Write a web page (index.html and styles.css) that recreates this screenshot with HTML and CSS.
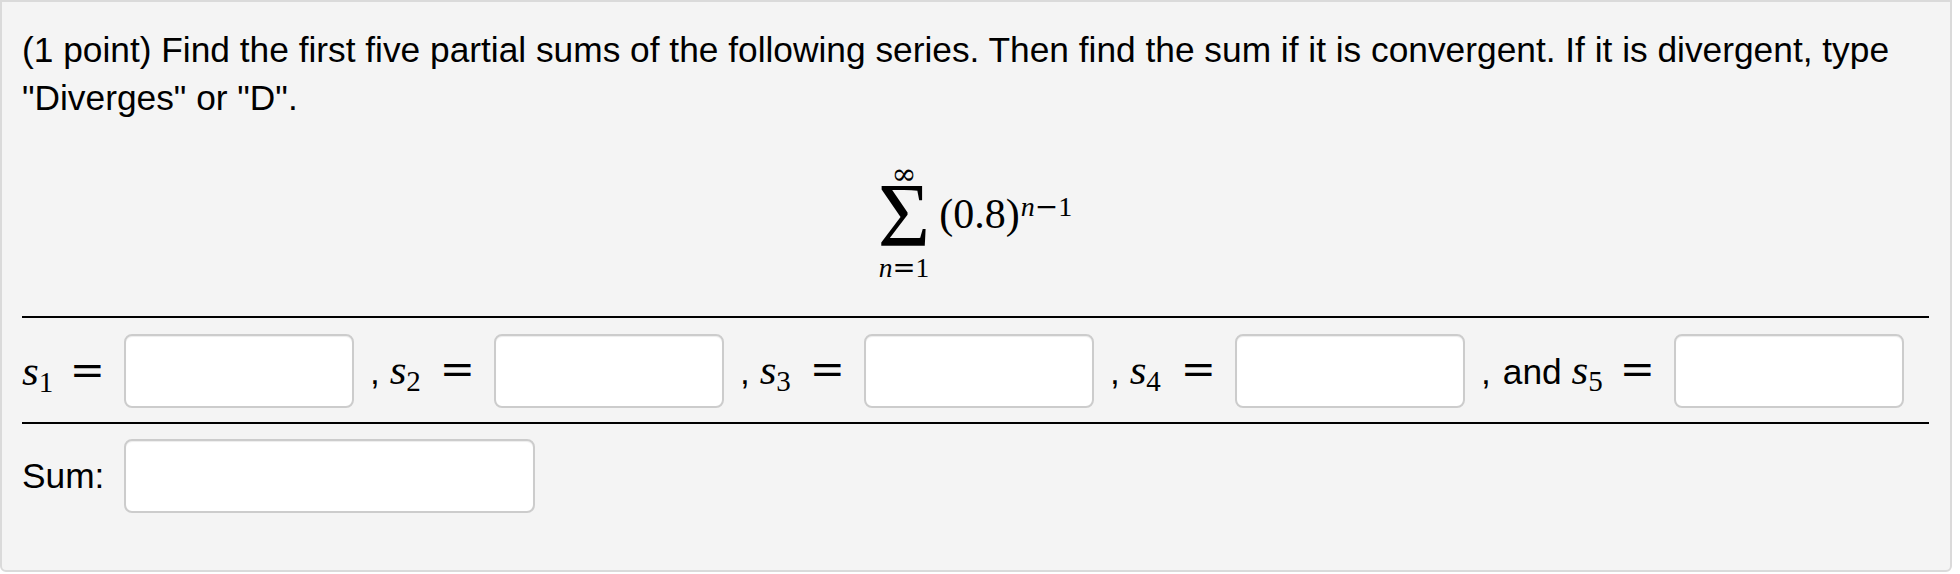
FILE: index.html
```html
<!DOCTYPE html>
<html lang="en">
<head>
<meta charset="utf-8">
<title>Partial sums</title>
<link rel="stylesheet" href="styles.css">
</head>
<body>
<div class="panel">
  <p class="q">(1 point) Find the first five partial sums of the following series. Then find the sum if it is convergent. If it is divergent, type "Diverges" or "D".</p>

  <div class="display">
    <div class="op">
      <span class="lim-top">∞</span>
      <span class="sigma">Σ</span>
      <span class="lim-bot"><i>n</i><span class="eqs">=</span>1</span>
    </div>
    <div class="term">
      <span class="base">(0.8)</span>
      <span class="sup"><i>n</i><span class="minus">−</span>1</span>
    </div>
  </div>

  <div class="sums">
    <span class="lbl lbl-first"><span class="var"><i>s</i><sub>1</sub></span><span class="eq">=</span></span>
    <input class="ans" type="text" aria-label="s1">
    <span class="lbl lbl-mid"><span class="comma">,&nbsp;</span><span class="var"><i>s</i><sub>2</sub></span><span class="eq">=</span></span>
    <input class="ans" type="text" aria-label="s2">
    <span class="lbl lbl-mid"><span class="comma">,&nbsp;</span><span class="var"><i>s</i><sub>3</sub></span><span class="eq">=</span></span>
    <input class="ans" type="text" aria-label="s3">
    <span class="lbl lbl-mid lbl-four"><span class="comma">,&nbsp;</span><span class="var"><i>s</i><sub>4</sub></span><span class="eq">=</span></span>
    <input class="ans" type="text" aria-label="s4">
    <span class="lbl lbl-last"><span class="comma">,</span><span class="word">and&nbsp;</span><span class="var"><i>s</i><sub>5</sub></span><span class="eq">=</span></span>
    <input class="ans" type="text" aria-label="s5">
  </div>

  <div class="total">
    <span class="sumlbl">Sum:</span>
    <input class="ans ans-wide" type="text" aria-label="Sum">
  </div>
</div>
</body>
</html>
```

FILE: styles.css
```css
* {
  box-sizing: border-box;
}

body {
  margin: 0;
  background: #ffffff;
}

.panel {
  width: 1952px;
  background: #f4f4f4;
  border: 2px solid #dadada;
  border-radius: 0 0 6px 6px;
  padding: 24px 21px 57px 20px;
  font-family: "Liberation Sans", Arial, sans-serif;
  font-size: 35.3px;
  color: #000;
}

.q {
  margin: 0;
  line-height: 48px;
}

/* display formula */
.display {
  display: flex;
  justify-content: center;
  align-items: flex-start;
  height: 194px;
  padding-top: 43px;
  font-family: "Liberation Serif", "Times New Roman", serif;
}

.op {
  display: flex;
  flex-direction: column;
  align-items: center;
}

.lim-top {
  font-family: "DejaVu Serif", serif;
  font-size: 30px;
  line-height: 18px;
}

.sigma {
  font-size: 90px;
  line-height: 66px;
  margin: 0 -4px;
}

.lim-bot {
  font-size: 27.5px;
  line-height: 36px;
  white-space: nowrap;
}

.eqs,
.minus {
  font-family: "DejaVu Serif", serif;
}

.term {
  display: flex;
  align-items: flex-start;
  margin-top: 28px;
  margin-left: 10px;
  white-space: nowrap;
}

.base {
  font-size: 42px;
  line-height: 42px;
}

.sup {
  font-size: 28px;
  line-height: 28px;
  margin-left: 1px;
}

/* answer rows */
.sums {
  display: flex;
  align-items: center;
  border-top: 2px solid #000;
  border-bottom: 2px solid #000;
  padding: 16px 0 14px;
}

.lbl {
  display: flex;
  align-items: baseline;
  flex: none;
  line-height: 48px;
  white-space: nowrap;
}

.lbl-first { width: 102px; }
.lbl-mid { width: 140px; }
.lbl-four { width: 141px; }
.lbl-last { width: 209px; }

.comma {
  margin-left: 16px;
}

.word {
  margin-left: 12px;
}

.var {
  font-family: "Liberation Serif", "Times New Roman", serif;
  font-size: 43px;
}

.var sub {
  font-size: 29px;
  font-style: normal;
  vertical-align: -7px;
  line-height: 0;
}

.eq {
  margin-left: auto;
  margin-right: 19px;
  font-family: "DejaVu Serif", serif;
  font-size: 42px;
}

.ans {
  flex: none;
  width: 230px;
  height: 74px;
  margin: 0;
  padding: 0 12px;
  border: 2px solid #cccccc;
  border-radius: 8px;
  background: #ffffff;
  box-shadow: inset 0 1px 1px rgba(0, 0, 0, 0.075);
  font: inherit;
}

.total {
  display: flex;
  align-items: center;
  margin-top: 15px;
}

.sumlbl {
  width: 102px;
  flex: none;
}

.ans-wide {
  width: 411px;
}
```
